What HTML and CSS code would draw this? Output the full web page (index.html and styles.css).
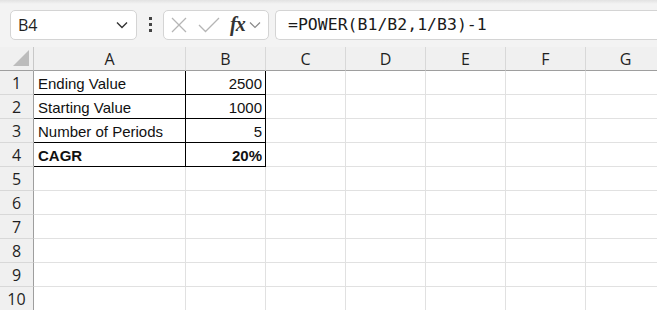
FILE: index.html
```html
<!DOCTYPE html>
<html lang="en">
<head>
    <meta charset="UTF-8">
    <title>CAGR</title>
    <link rel="stylesheet" href="styles.css">
</head>
<body>
    <div class="toolbar">
        <div class="name-box">
            <span>B4</span>
            <svg class="chev" width="12" height="8" viewBox="0 0 12 8"><path d="M1 1.5 L6 6.5 L11 1.5" fill="none" stroke="#333" stroke-width="1.4"/></svg>
        </div>
        <div class="dots"><i></i><i></i><i></i></div>
        <div class="fx-box">
            <svg width="16" height="16" viewBox="0 0 16 16"><path d="M1 1 L15 15 M15 1 L1 15" stroke="#b5b5b5" stroke-width="1.3" fill="none"/></svg>
            <svg width="22" height="16" viewBox="0 0 22 16"><path d="M1 8 L7.5 14.5 L21 1" stroke="#b5b5b5" stroke-width="1.3" fill="none"/></svg>
            <span class="fx">fx</span>
            <svg width="12" height="8" viewBox="0 0 12 8"><path d="M1 1.5 L6 6.5 L11 1.5" fill="none" stroke="#8a8a8a" stroke-width="1.2"/></svg>
        </div>
        <div class="formula">=POWER(B1/B2,1/B3)-1</div>
    </div>

    <div class="sheet">
        <div class="corner"><span class="tri"></span></div>
        <div class="col-head">A</div>
        <div class="col-head">B</div>
        <div class="col-head">C</div>
        <div class="col-head">D</div>
        <div class="col-head">E</div>
        <div class="col-head">F</div>
        <div class="col-head">G</div>

        <div class="row-head">1</div>
        <div class="cell boxed">Ending Value</div>
        <div class="cell boxed num">2500</div>
        <div class="cell"></div><div class="cell"></div><div class="cell"></div><div class="cell"></div><div class="cell"></div>

        <div class="row-head">2</div>
        <div class="cell boxed">Starting Value</div>
        <div class="cell boxed num">1000</div>
        <div class="cell"></div><div class="cell"></div><div class="cell"></div><div class="cell"></div><div class="cell"></div>

        <div class="row-head">3</div>
        <div class="cell boxed">Number of Periods</div>
        <div class="cell boxed num">5</div>
        <div class="cell"></div><div class="cell"></div><div class="cell"></div><div class="cell"></div><div class="cell"></div>

        <div class="row-head">4</div>
        <div class="cell boxed bold">CAGR</div>
        <div class="cell boxed num bold">20%</div>
        <div class="cell"></div><div class="cell"></div><div class="cell"></div><div class="cell"></div><div class="cell"></div>

        <div class="row-head">5</div>
        <div class="cell"></div><div class="cell"></div><div class="cell"></div><div class="cell"></div><div class="cell"></div><div class="cell"></div><div class="cell"></div>
        <div class="row-head">6</div>
        <div class="cell"></div><div class="cell"></div><div class="cell"></div><div class="cell"></div><div class="cell"></div><div class="cell"></div><div class="cell"></div>
        <div class="row-head">7</div>
        <div class="cell"></div><div class="cell"></div><div class="cell"></div><div class="cell"></div><div class="cell"></div><div class="cell"></div><div class="cell"></div>
        <div class="row-head">8</div>
        <div class="cell"></div><div class="cell"></div><div class="cell"></div><div class="cell"></div><div class="cell"></div><div class="cell"></div><div class="cell"></div>
        <div class="row-head">9</div>
        <div class="cell"></div><div class="cell"></div><div class="cell"></div><div class="cell"></div><div class="cell"></div><div class="cell"></div><div class="cell"></div>
        <div class="row-head">10</div>
        <div class="cell"></div><div class="cell"></div><div class="cell"></div><div class="cell"></div><div class="cell"></div><div class="cell"></div><div class="cell"></div>
    </div>
</body>
</html>
```

FILE: styles.css
```css
* {
    box-sizing: border-box;
}

body {
    margin: 0;
    width: 657px;
    height: 310px;
    overflow: hidden;
    background-color: #ffffff;
    font-family: "Liberation Sans", Arial, sans-serif;
    color: #111111;
}

.toolbar {
    height: 47px;
    background: linear-gradient(#e2e2e2, #f3f3f3 4px);
    display: flex;
    align-items: center;
    padding: 2px 0 0 10px;
}

.name-box {
    width: 127px;
    height: 30px;
    background-color: #ffffff;
    border: 1px solid #d4d4d4;
    border-radius: 5px;
    display: flex;
    align-items: center;
    justify-content: space-between;
    padding: 0 8px 0 7px;
    font-family: "Open Sans", sans-serif;
    font-size: 16px;
    color: #222222;
}

.dots {
    width: 26px;
    display: flex;
    flex-direction: column;
    align-items: center;
    gap: 3px;
}

.dots i {
    width: 3px;
    height: 3px;
    background-color: #444444;
}

.fx-box {
    width: 106px;
    height: 30px;
    background-color: #ffffff;
    border: 1px solid #d4d4d4;
    border-radius: 5px;
    display: flex;
    align-items: center;
    padding: 0 3px 0 7px;
    gap: 0;
}

.fx-box svg:nth-child(2) {
    margin-left: 11px;
}

.fx {
    font-family: "Liberation Serif", serif;
    font-style: italic;
    font-weight: bold;
    font-size: 20px;
    color: #333333;
    margin: 0 4px 0 10px;
    letter-spacing: -1px;
}

.formula {
    flex: 1;
    height: 30px;
    margin-left: 6px;
    background-color: #ffffff;
    border: 1px solid #d4d4d4;
    border-right: none;
    border-radius: 5px 0 0 5px;
    display: flex;
    align-items: center;
    padding-left: 12px;
    font-family: "DejaVu Sans Mono", monospace;
    font-size: 16.5px;
    color: #1a1a1a;
}

.sheet {
    display: grid;
    grid-template-columns: 34px 152px 80px 80px 80px 80px 80px 80px;
    grid-template-rows: 24px repeat(10, 24px);
}

.corner,
.col-head,
.row-head {
    background-color: #f0f0f0;
    font-family: "Open Sans", sans-serif;
    font-size: 16px;
    color: #1f1f1f;
    display: flex;
    align-items: center;
    justify-content: center;
}

.corner {
    border-right: 1px solid #c8c8c8;
    border-bottom: 1px solid #9e9e9e;
    position: relative;
}

.tri {
    position: absolute;
    right: 4px;
    bottom: 4px;
    width: 0;
    height: 0;
    border-left: 16px solid transparent;
    border-bottom: 16px solid #bcbcbc;
}

.col-head {
    border-right: 1px solid #d8d8d8;
    border-bottom: 1px solid #9e9e9e;
    padding-top: 1px;
}

.row-head {
    border-right: 1px solid #9e9e9e;
    border-bottom: 1px solid #d8d8d8;
    padding-top: 1px;
}

.cell {
    border-right: 1px solid #e1e1e1;
    border-bottom: 1px solid #e1e1e1;
    font-size: 15px;
    display: flex;
    align-items: center;
    padding: 1px 3px 0 4px;
    white-space: nowrap;
}

.cell.boxed {
    border-right-color: #000000;
    border-bottom-color: #000000;
}

.num {
    justify-content: flex-end;
}

.bold {
    font-weight: bold;
}
```
